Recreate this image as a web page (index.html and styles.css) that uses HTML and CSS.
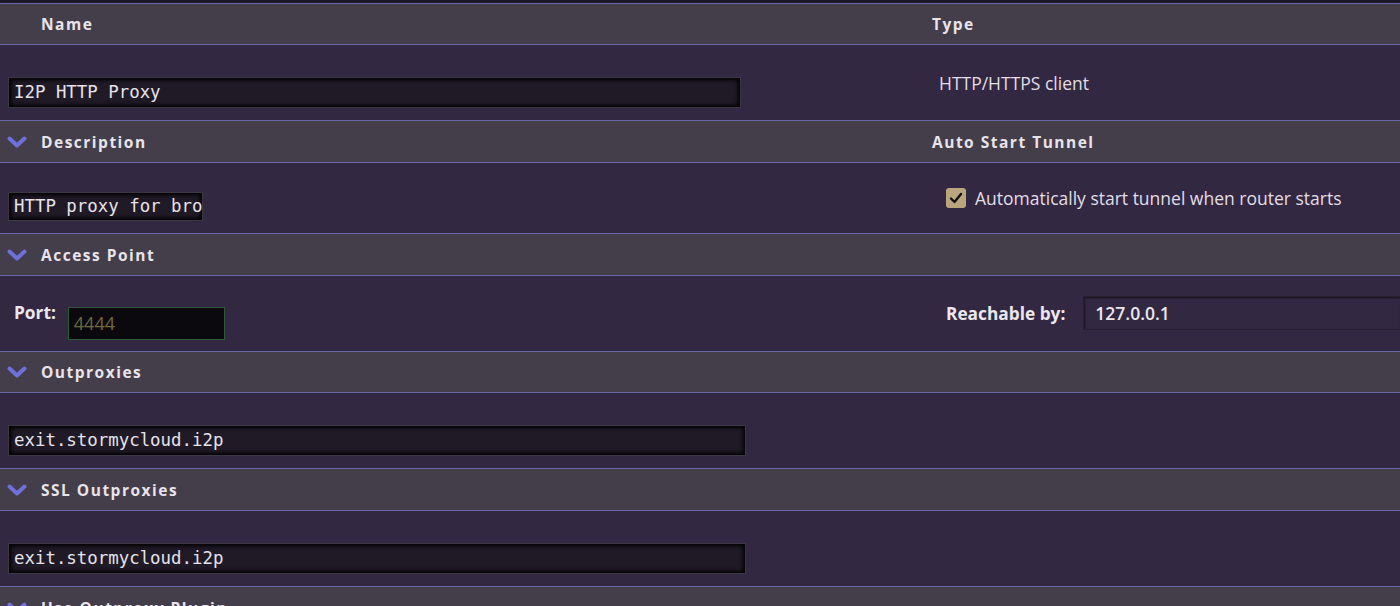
FILE: index.html
```html
<!DOCTYPE html>
<html>
<head>
<meta charset="utf-8">
<link rel="stylesheet" href="styles.css">
</head>
<body>
<div class="page">
  <div class="hdr thin">
    <div class="hcell nochev">Name</div>
    <div class="hcell right">Type</div>
  </div>
  <div class="row tall">
    <div class="lcell bottom"><div class="field wide">I2P HTTP Proxy</div></div>
    <div class="rcell plain">HTTP/HTTPS client</div>
  </div>

  <div class="hdr">
    <div class="hcell"><svg class="chev" viewBox="0 0 20 12"><polyline points="2.5,2.5 10,9.5 17.5,2.5"/></svg>Description</div>
    <div class="hcell right">Auto Start Tunnel</div>
  </div>
  <div class="row short">
    <div class="lcell bottom"><div class="field desc">HTTP proxy for browsing</div></div>
    <div class="rcell check">
      <span class="box"><svg viewBox="0 0 20 20"><polyline points="5,10.5 8.5,14 15,6"/></svg></span>
      <span>Automatically start tunnel when router starts</span>
    </div>
  </div>

  <div class="hdr">
    <div class="hcell"><svg class="chev" viewBox="0 0 20 12"><polyline points="2.5,2.5 10,9.5 17.5,2.5"/></svg>Access Point</div>
    <div class="hcell right"></div>
  </div>
  <div class="row tall">
    <div class="lcell bottom port">
      <span class="lbl">Port:</span>
      <div class="portin">4444</div>
    </div>
    <div class="rcell reach">
      <span class="lbl">Reachable by:</span>
      <div class="reachin">127.0.0.1</div>
    </div>
  </div>

  <div class="hdr thin">
    <div class="hcell"><svg class="chev" viewBox="0 0 20 12"><polyline points="2.5,2.5 10,9.5 17.5,2.5"/></svg>Outproxies</div>
    <div class="hcell right"></div>
  </div>
  <div class="row tall">
    <div class="lcell bottom"><div class="field wide2">exit.stormycloud.i2p</div></div>
    <div class="rcell"></div>
  </div>

  <div class="hdr">
    <div class="hcell"><svg class="chev" viewBox="0 0 20 12"><polyline points="2.5,2.5 10,9.5 17.5,2.5"/></svg>SSL Outproxies</div>
    <div class="hcell right"></div>
  </div>
  <div class="row tall">
    <div class="lcell bottom"><div class="field wide2">exit.stormycloud.i2p</div></div>
    <div class="rcell"></div>
  </div>

  <div class="hdr">
    <div class="hcell"><svg class="chev" viewBox="0 0 20 12"><polyline points="2.5,2.5 10,9.5 17.5,2.5"/></svg>Use Outproxy Plugin</div>
    <div class="hcell right"></div>
  </div>
</div>
</body>
</html>
```

FILE: styles.css
```css
html, body {
  margin: 0;
  padding: 0;
  background: #1d1826;
  overflow: hidden;
}
.page {
  padding-top: 3px;
  font-family: "Open Sans", "Noto Sans", sans-serif;
  color: #e4e0e8;
}
.hdr {
  display: grid;
  grid-template-columns: 920px 1fr;
  height: 41px;
  background: #443e4a;
  border-top: 1px solid #6a66aa;
  align-items: center;
}
.hdr.thin {
  height: 40px;
}
.hcell {
  display: flex;
  align-items: center;
  padding-left: 7px;
  font-weight: 700;
  font-size: 15.5px;
  letter-spacing: 1.5px;
  color: #e8e4ea;
}
.hcell.nochev {
  padding-left: 41px;
}
.hcell.right {
  padding-left: 12px;
}
.chev {
  width: 20px;
  height: 12px;
  margin-right: 14px;
  fill: none;
  stroke: #6e70dc;
  stroke-width: 4;
  stroke-linecap: round;
  stroke-linejoin: round;
}
.row {
  display: grid;
  grid-template-columns: 920px 1fr;
  background: #332842;
  border-top: 1px solid #6a66aa;
}
.row.tall { height: 75px; }
.row.short { height: 70px; }
.lcell {
  display: flex;
  padding-left: 8px;
}
.lcell.bottom {
  align-items: flex-end;
  padding-bottom: 12px;
}
.rcell {
  display: flex;
  align-items: center;
}
.field {
  box-sizing: border-box;
  height: 31px;
  line-height: 29px;
  padding-left: 5px;
  font-family: "DejaVu Sans Mono", monospace;
  font-size: 17.4px;
  color: #e6e2ea;
  background: #201a26;
  border: 1px solid #3c3742;
  box-shadow: inset 0 0 4px 2px #000;
  white-space: nowrap;
  overflow: hidden;
}
.field.wide { width: 733px; }
.field.wide2 { width: 738px; }
.field.desc { width: 195px; height: 29px; line-height: 27px; }
.rcell.plain {
  padding-left: 19px;
  font-size: 17.5px;
  color: #e2dee6;
}
.rcell.check {
  padding-left: 26px;
  font-size: 17.5px;
  color: #e2dee6;
  gap: 9px;
}
.box {
  width: 20px;
  height: 20px;
  border-radius: 3px;
  background: #b9a57e;
  display: flex;
}
.box svg {
  width: 20px;
  height: 20px;
  fill: none;
  stroke: #111;
  stroke-width: 2.4;
  stroke-linecap: round;
  stroke-linejoin: round;
}
.lbl {
  font-weight: 700;
  font-size: 17.3px;
  color: #ebe7ee;
}
.lcell.port {
  padding-left: 14px;
  gap: 12px;
  padding-bottom: 11px;
}
.lcell.port .lbl {
  align-self: flex-end;
  margin-bottom: 16px;
}
.portin {
  box-sizing: border-box;
  width: 157px;
  height: 33px;
  line-height: 31px;
  padding-left: 5px;
  background: #0b090e;
  border: 1px solid #2d5a34;
  color: #6d6a3e;
  font-size: 18px;
  font-family: "Open Sans", sans-serif;
}
.rcell.reach {
  padding-left: 26px;
  gap: 18px;
}
.reachin {
  box-sizing: border-box;
  flex: 1;
  height: 34px;
  line-height: 32px;
  padding-left: 11px;
  border: 1px solid #26202e;
  border-right: none;
  box-shadow: inset 1px 1px 2px #1a1420;
  background: #332842;
  font-weight: 600;
  font-size: 17.5px;
  color: #ebe7ee;
  margin-top: -1px;
}
```
